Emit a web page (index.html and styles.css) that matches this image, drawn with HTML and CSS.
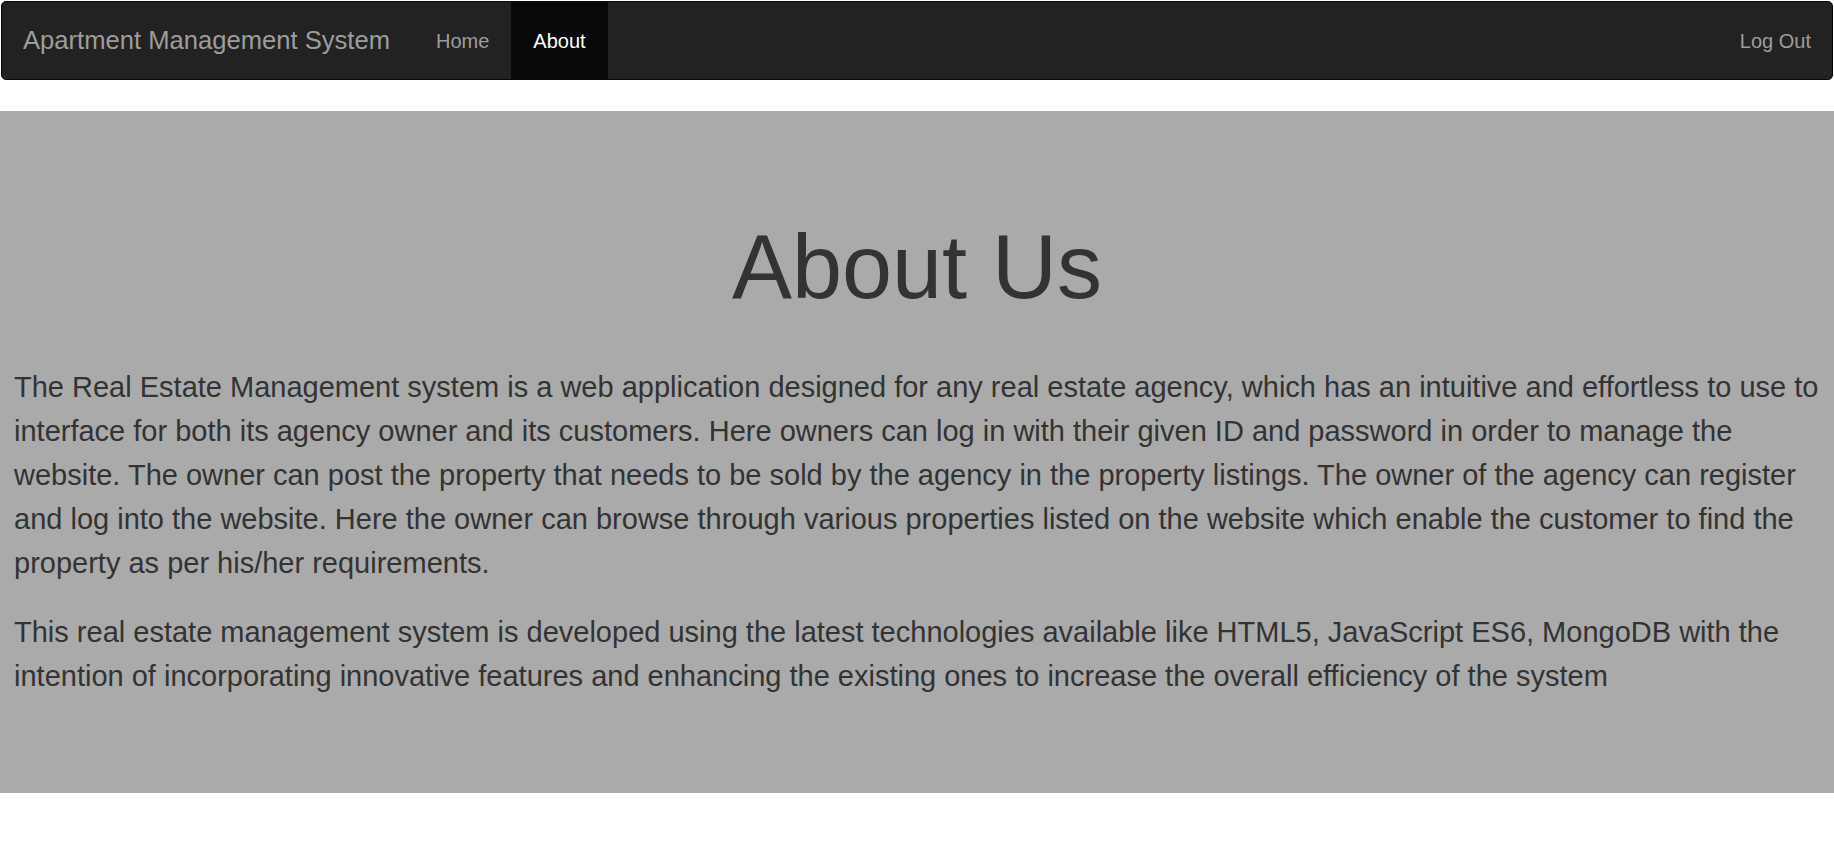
FILE: index.html
```html
<!DOCTYPE html>
<html lang="en">
<head>
<meta charset="utf-8">
<title>About - Apartment Management System</title>
<link rel="stylesheet" href="styles.css">
</head>
<body>
<nav class="navbar">
  <a class="brand" href="#">Apartment Management System</a>
  <ul class="nav">
    <li><a href="#">Home</a></li>
    <li class="active"><a href="#">About</a></li>
  </ul>
  <ul class="nav nav-right">
    <li><a href="#">Log Out</a></li>
  </ul>
</nav>
<section class="jumbotron">
  <h1 class="title">About Us</h1>
  <p class="text">The Real Estate Management system is a web application designed for any real estate agency, which has an intuitive and effortless to use to interface for both its agency owner and its customers. Here owners can log in with their given ID and password in order to manage the website. The owner can post the property that needs to be sold by the agency in the property listings. The owner of the agency can register and log into the website. Here the owner can browse through various properties listed on the website which enable the customer to find the property as per his/her requirements.</p>
  <p class="text">This real estate management system is developed using the latest technologies available like HTML5, JavaScript ES6, MongoDB with the intention of incorporating innovative features and enhancing the existing ones to increase the overall efficiency of the system</p>
</section>
</body>
</html>
```
FILE: styles.css
```css
html, body {
  margin: 0;
  padding: 0;
  background: #fff;
}
body {
  padding-top: 1px;
  font-family: "Liberation Sans", Arial, Helvetica, sans-serif;
  color: #333;
}
a {
  text-decoration: none;
}
.navbar {
  margin: 0 1px;
  height: 79px;
  box-sizing: border-box;
  background: #222;
  border: 1px solid #080808;
  border-radius: 5px;
  display: flex;
  align-items: stretch;
}
.brand {
  display: flex;
  align-items: center;
  padding: 0 20px 0 21px;
  font-size: 25.6px;
  color: #9d9d9d;
  width: 371px;
  white-space: nowrap;
}
.nav {
  list-style: none;
  margin: 0;
  padding: 0;
  display: flex;
  align-items: stretch;
}
.nav li {
  display: flex;
}
.nav a {
  display: flex;
  align-items: center;
  padding: 1px 22px 0;
  font-size: 20px;
  color: #9d9d9d;
}
.nav .active a {
  background: #080808;
  color: #fff;
}
.nav-right {
  margin-left: auto;
}
.nav-right a {
  padding-right: 21px;
}
.jumbotron {
  margin-top: 31px;
  background: #aaa;
  height: 682px;
  box-sizing: border-box;
  padding: 107px 10px 0 14px;
}
.title {
  margin: 0;
  text-align: center;
  font-weight: 400;
  font-size: 90px;
  line-height: 99px;
  color: #333;
  padding-right: 4px;
}
.text {
  margin: 48px 0 0;
  font-size: 29px;
  line-height: 44px;
  color: #333;
}
.text + .text {
  margin-top: 25px;
}
```
